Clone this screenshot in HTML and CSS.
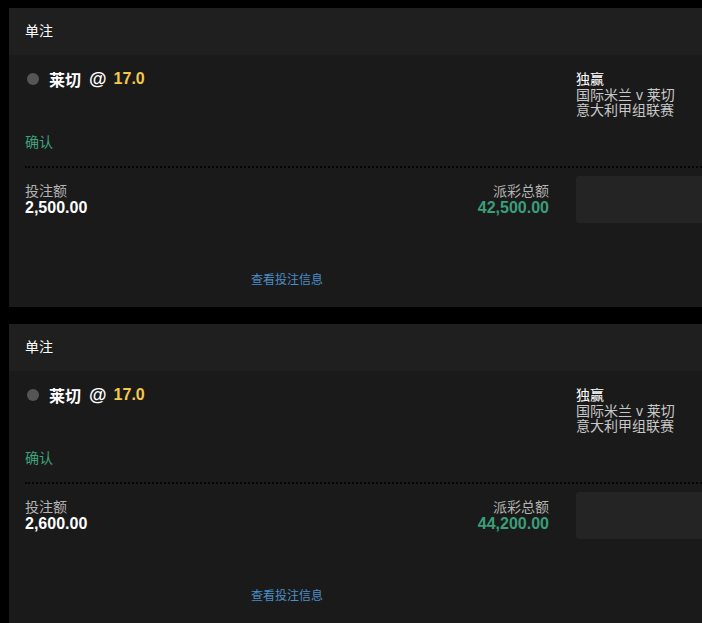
FILE: index.html
```html
<!DOCTYPE html>
<html>
<head>
<meta charset="utf-8">
<title>单注</title>
<link rel="stylesheet" href="styles.css">
</head>
<body>
<div class="bet-list">

    <div class="bet-card">
        <div class="bet-header">单注</div>
        <div class="bet-body">
            <div class="bet-row">
                <div class="bet-main">
                    <div class="selection">
                        <span class="dot"></span>
                        <span class="pick">莱切</span>
                        <span class="at">@</span>
                        <span class="odds">17.0</span>
                    </div>
                    <div class="status">确认</div>
                </div>
                <div class="market">
                    <div class="market-type">独赢</div>
                    <div>国际米兰 v 莱切</div>
                    <div>意大利甲组联赛</div>
                </div>
            </div>
            <div class="divider"></div>
            <div class="bet-row">
                <div class="amounts">
                    <div class="amount">
                        <div class="label">投注额</div>
                        <div class="value">2,500.00</div>
                    </div>
                    <div class="amount right">
                        <div class="label">派彩总额</div>
                        <div class="value win">42,500.00</div>
                    </div>
                </div>
                <div class="side-box"></div>
            </div>
            <div class="bet-row">
                <a class="detail-link" href="#">查看投注信息</a>
            </div>
        </div>
    </div>

    <div class="bet-card">
        <div class="bet-header">单注</div>
        <div class="bet-body">
            <div class="bet-row">
                <div class="bet-main">
                    <div class="selection">
                        <span class="dot"></span>
                        <span class="pick">莱切</span>
                        <span class="at">@</span>
                        <span class="odds">17.0</span>
                    </div>
                    <div class="status">确认</div>
                </div>
                <div class="market">
                    <div class="market-type">独赢</div>
                    <div>国际米兰 v 莱切</div>
                    <div>意大利甲组联赛</div>
                </div>
            </div>
            <div class="divider"></div>
            <div class="bet-row">
                <div class="amounts">
                    <div class="amount">
                        <div class="label">投注额</div>
                        <div class="value">2,600.00</div>
                    </div>
                    <div class="amount right">
                        <div class="label">派彩总额</div>
                        <div class="value win">44,200.00</div>
                    </div>
                </div>
                <div class="side-box"></div>
            </div>
            <div class="bet-row">
                <a class="detail-link" href="#">查看投注信息</a>
            </div>
        </div>
    </div>

</div>
</body>
</html>
```

FILE: styles.css
```css
/* 全局样式 */
html, body {
    overflow: hidden;
}

body {
    margin: 0;
    padding: 8px 0 0 9px;
    background-color: #000;
    font-family: 'Liberation Sans', 'Noto Sans CJK SC', sans-serif;
    font-size: 14px;
    color: #e6e6e6;
}

.bet-list {
    display: flex;
    flex-direction: column;
    gap: 17px;
    width: 760px;
}

/* 卡片 */
.bet-card {
    background-color: #1a1a1a;
}

.bet-header {
    height: 47px;
    line-height: 47px;
    padding-left: 16px;
    background-color: #1f1f1f;
    color: #fff;
}

.bet-body {
    padding: 14px 0 19px 16px;
}

.bet-row {
    display: grid;
    grid-template-columns: 524px 1fr;
    column-gap: 27px;
}

/* 选项 */
.selection {
    display: flex;
    align-items: center;
    height: 20px;
    font-size: 16px;
    font-weight: bold;
    color: #fff;
}

.dot {
    width: 12px;
    height: 12px;
    margin: 0 10px 0 2px;
    border-radius: 50%;
    background-color: #555;
}

.at {
    margin: 0 7px 0 8px;
    font-size: 18px;
}

.odds {
    color: #f4c84a;
}

.status {
    margin-top: 45px;
    line-height: 16px;
    color: #3fa37c;
}

.market {
    padding-top: 3px;
    line-height: 15.5px;
    color: #c8c8c8;
}

.market-type {
    color: #fff;
}

.divider {
    margin: 16px 0 8px;
    border-top: 2px dotted #050505;
}

/* 金额 */
.amounts {
    display: flex;
    justify-content: space-between;
    padding-top: 7px;
}

.amount .label {
    line-height: 16px;
    color: #b4b4b4;
}

.amount .value {
    line-height: 18px;
    font-size: 16px;
    font-weight: bold;
    color: #fff;
}

.amount.right {
    text-align: right;
}

.amount .value.win {
    color: #3a9e7a;
}

.side-box {
    height: 47px;
    border-radius: 3px 0 0 3px;
    background-color: #242424;
}

.detail-link {
    margin-top: 49px;
    line-height: 16px;
    text-align: center;
    font-size: 12px;
    color: #4b8ec6;
    text-decoration: none;
}
```
